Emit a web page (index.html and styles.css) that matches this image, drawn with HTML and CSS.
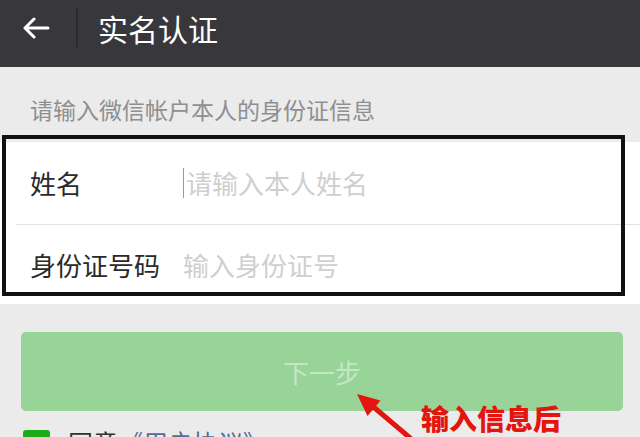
FILE: index.html
```html
<!DOCTYPE html>
<html lang="zh-CN">
<head>
<meta charset="utf-8">
<title>实名认证</title>
<link rel="stylesheet" href="styles.css">
</head>
<body>
<div class="page">
  <header class="header">
    <div class="back">
      <svg width="28" height="22" viewBox="0 0 28 22"><path d="M26 11H3M12 2L3 11l9 9" fill="none" stroke="#fff" stroke-width="3" stroke-linecap="round" stroke-linejoin="round"/></svg>
    </div>
    <div class="sep"></div>
    <h1 class="title">实名认证</h1>
  </header>

  <p class="hint">请输入微信帐户本人的身份证信息</p>

  <div class="card">
    <div class="row row-first">
      <span class="label">姓名</span>
      <span class="cursor"></span>
      <span class="placeholder">请输入本人姓名</span>
    </div>
    <div class="divider"></div>
    <div class="row row-second">
      <span class="label">身份证号码</span>
      <span class="placeholder">输入身份证号</span>
    </div>
  </div>

  <div class="btn">下一步</div>

  <div class="agree">
    <span class="check"></span>
    <span class="agree-text">同意<span class="link">《用户协议》</span></span>
  </div>

  <div class="frame"></div>
  <svg class="arrow" width="640" height="437" viewBox="0 0 640 437">
    <line x1="422" y1="448" x2="370" y2="404" stroke="#e4140e" stroke-width="5"/>
    <polygon points="357,394 380.5,400.5 367.5,416" fill="#e4140e"/>
  </svg>
  <div class="note">输入信息后<br>点击下一步</div>
</div>
</body>
</html>
```

FILE: styles.css
```css
* { box-sizing: border-box; }
html, body { margin: 0; padding: 0; }
body {
  background: #ebebeb;
  font-family: "Noto Sans CJK SC", "Noto Sans", sans-serif;
  width: 640px;
  height: 437px;
  overflow: hidden;
}
.page { position: relative; width: 640px; height: 437px; overflow: hidden; }

.header {
  height: 67px;
  background: #38383c;
  display: flex;
  align-items: flex-start;
}
.back {
  width: 76px;
  height: 56px;
  display: flex;
  align-items: center;
  padding-left: 22px;
}
.back svg { display: block; }
.sep {
  width: 2px;
  height: 39px;
  margin-top: 8px;
  background: #2b2b2e;
}
.title {
  margin: 13px 0 0 20px;
  font-size: 30px;
  line-height: 30px;
  font-weight: normal;
  color: #fff;
}

.hint {
  margin: 31px 0 0 0;
  padding-left: 30px;
  font-size: 23px;
  line-height: 23px;
  color: #8f8f8f;
}

.card {
  margin-top: 21px;
  background: #fff;
}
.row {
  display: flex;
  align-items: center;
  padding-left: 30px;
}
.row-first { height: 82px; }
.row-second { height: 79px; }
.label {
  width: 153px;
  font-size: 26px;
  line-height: 26px;
  color: #2a2a2a;
}
.cursor {
  width: 1px;
  height: 30px;
  background: #9a9a9a;
  margin-right: 2px;
}
.placeholder {
  font-size: 26px;
  line-height: 26px;
  color: #cfcfcf;
}
.divider {
  height: 1px;
  margin-left: 16px;
  background: #e2e2e2;
}

.btn {
  margin: 28px 17px 0 21px;
  height: 79px;
  border-radius: 5px;
  background: #98d398;
  color: #c4e7c4;
  font-size: 26px;
  display: flex;
  align-items: center;
  justify-content: center;
}

.agree {
  margin-top: 19px;
  padding-left: 23px;
  display: flex;
  align-items: flex-start;
}
.check {
  width: 27px;
  height: 27px;
  border-radius: 3px;
  background: #1aad19;
}
.agree-text {
  margin-left: 18px;
  font-size: 25px;
  line-height: 25px;
  color: #333;
}
.link { color: #576b95; }

.frame {
  position: absolute;
  left: 2px;
  top: 135px;
  width: 623px;
  height: 161px;
  border: 4px solid #111;
}
.arrow { position: absolute; left: 0; top: 0; }
.note {
  position: absolute;
  left: 421px;
  top: 400px;
  font-size: 28px;
  line-height: 37px;
  font-weight: 900;
  color: #e4140e;
}
```
